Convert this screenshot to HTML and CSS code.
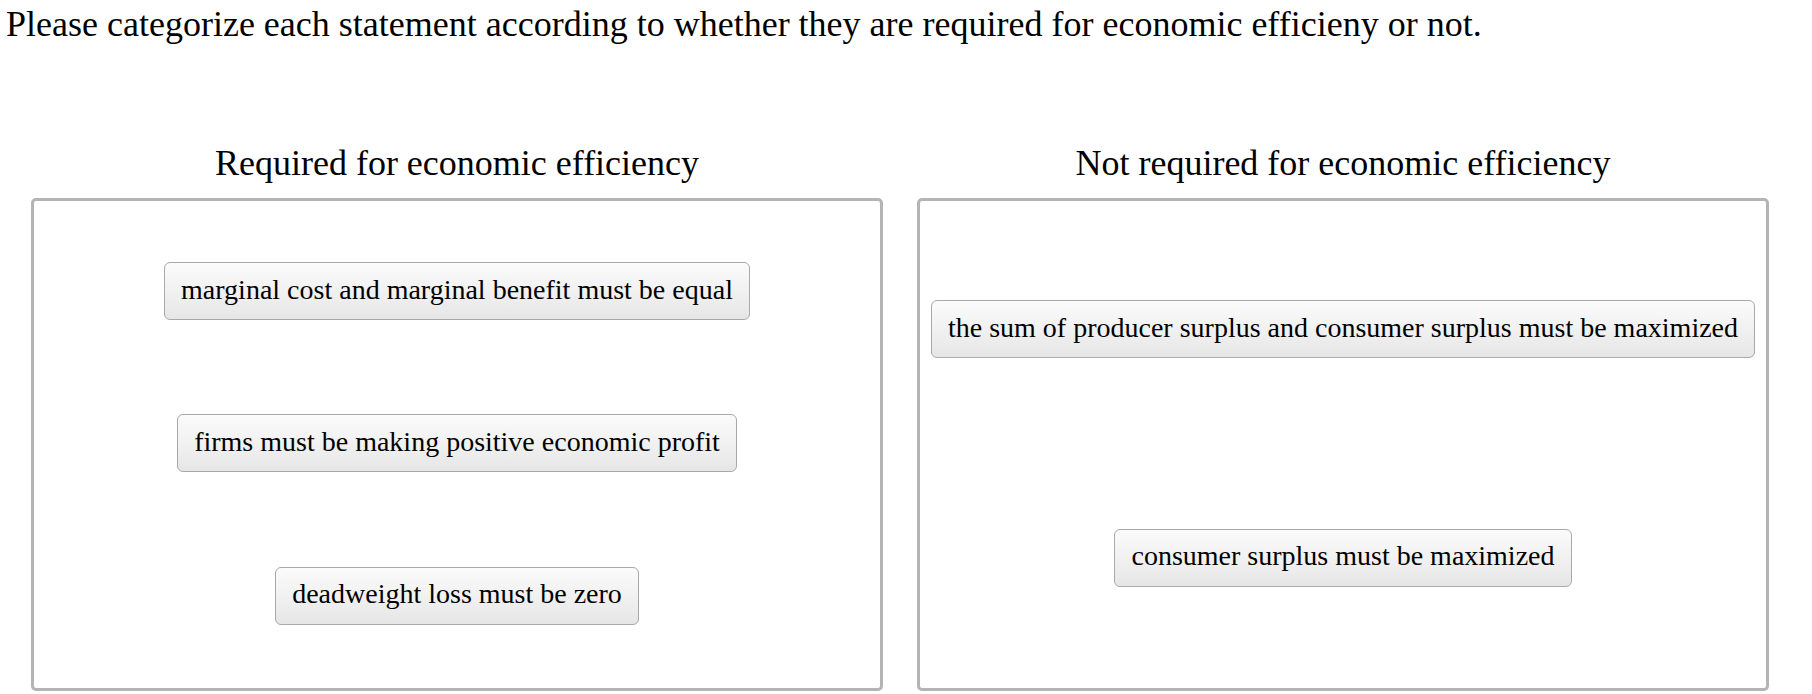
FILE: index.html
```html
<!DOCTYPE html>
<html lang="en">
<head>
<meta charset="utf-8">
<title>Categorize statements</title>
<link rel="stylesheet" href="styles.css">
</head>
<body>
<p class="prompt">Please categorize each statement according to whether they are required for economic efficieny or not.</p>
<div class="columns">
  <section class="column">
    <h2 class="heading">Required for economic efficiency</h2>
    <div class="bin">
      <div class="chip">marginal cost and marginal benefit must be equal</div>
      <div class="chip">firms must be making positive economic profit</div>
      <div class="chip">deadweight loss must be zero</div>
    </div>
  </section>
  <section class="column">
    <h2 class="heading">Not required for economic efficiency</h2>
    <div class="bin">
      <div class="chip">the sum of producer surplus and consumer surplus must be maximized</div>
      <div class="chip">consumer surplus must be maximized</div>
    </div>
  </section>
</div>
</body>
</html>
```

FILE: styles.css
```css
html, body {
  margin: 0;
  padding: 0;
  background: #ffffff;
}

body {
  font-family: "Liberation Serif", "Times New Roman", serif;
  color: #000000;
  width: 1812px;
  height: 694px;
  overflow: hidden;
}

.prompt {
  margin: 0;
  padding: 4px 0 0 6px;
  font-size: 36px;
  line-height: 40px;
}

.columns {
  display: grid;
  grid-template-columns: 1fr 1fr;
  column-gap: 34px;
  padding: 0 43px 0 31px;
  margin-top: 99px;
}

.column {
  display: flex;
  flex-direction: column;
}

.heading {
  margin: 0 0 15px 0;
  font-weight: normal;
  font-size: 36px;
  line-height: 40px;
  text-align: center;
}

.bin {
  box-sizing: border-box;
  height: 493px;
  border: 3px solid #b4b4b4;
  border-radius: 5px;
  padding: 14px 10px 16px;
  display: flex;
  flex-direction: column;
  align-items: center;
  justify-content: space-around;
}

.chip {
  box-sizing: border-box;
  height: 58px;
  padding: 0 16px 3px;
  display: flex;
  align-items: center;
  font-size: 28px;
  white-space: nowrap;
  border: 1px solid #a9a9a9;
  border-radius: 6px;
  background: linear-gradient(to bottom, #fbfbfb 0%, #f1f1f1 50%, #e6e6e6 100%);
}
```
